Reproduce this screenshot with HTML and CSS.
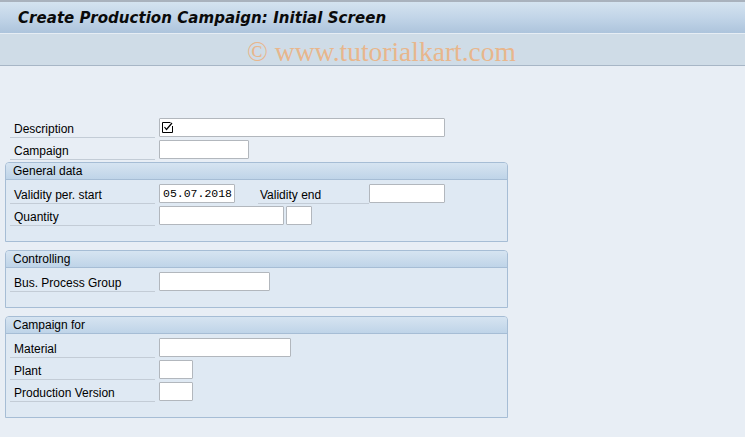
FILE: index.html
```html
<!DOCTYPE html>
<html>
<head>
<meta charset="utf-8">
<link rel="stylesheet" href="styles.css">
</head>
<body>
<div class="titlebar"><span class="title">Create Production Campaign: Initial Screen</span></div>
<div class="toolbar"><span class="watermark">© www.tutorialkart.com</span></div>
<div class="content">
  <div class="row">
    <span class="label">Description</span>
    <span class="field w-desc"><svg class="chk" width="11" height="11" viewBox="0 0 11 11"><path d="M8.5 0.5 H0.5 V10.5 H10.5 V4" fill="none" stroke="#000" stroke-width="1"/><path d="M2.5 5 L4.5 7.5 L10 1" fill="none" stroke="#000" stroke-width="1.2"/></svg></span>
  </div>
  <div class="row">
    <span class="label">Campaign</span>
    <span class="field w-camp"></span>
  </div>

  <div class="group">
    <div class="group-head">General data</div>
    <div class="group-body">
      <div class="row">
        <span class="label">Validity per. start</span>
        <span class="field w-date mono">05.07.2018</span>
        <span class="label label-end">Validity end</span>
        <span class="field w-date2"></span>
      </div>
      <div class="row">
        <span class="label">Quantity</span>
        <span class="field w-qty"></span>
        <span class="field w-unit"></span>
      </div>
    </div>
  </div>

  <div class="group">
    <div class="group-head">Controlling</div>
    <div class="group-body">
      <div class="row">
        <span class="label">Bus. Process Group</span>
        <span class="field w-bpg"></span>
      </div>
    </div>
  </div>

  <div class="group">
    <div class="group-head">Campaign for</div>
    <div class="group-body">
      <div class="row">
        <span class="label">Material</span>
        <span class="field w-mat"></span>
      </div>
      <div class="row">
        <span class="label">Plant</span>
        <span class="field w-plant"></span>
      </div>
      <div class="row">
        <span class="label">Production Version</span>
        <span class="field w-plant"></span>
      </div>
    </div>
  </div>
</div>
</body>
</html>
```

FILE: styles.css
```css
html, body {
  margin: 0;
  padding: 0;
}
body {
  width: 745px;
  height: 437px;
  overflow: hidden;
  background: #e8eef5;
  font-family: "Liberation Sans", Arial, sans-serif;
  font-size: 12px;
  color: #000;
}
.titlebar {
  height: 31px;
  border-top: 2px solid #a9b2bd;
  border-bottom: 1px solid #e6edf4;
  background: linear-gradient(to bottom, #d4e3f0 0%, #c2d5e8 50%, #adc4dc 100%);
  display: flex;
  align-items: center;
  padding-left: 18px;
}
.title {
  font-family: "DejaVu Sans", Verdana, sans-serif;
  font-weight: bold;
  font-style: italic;
  font-size: 15px;
  letter-spacing: 0.05px;
  color: #0a0a0a;
  padding-top: 1px;
}
.toolbar {
  height: 31px;
  background: #cfdce7;
  border-bottom: 1px solid #a7b6c6;
  display: flex;
  align-items: center;
  justify-content: center;
}
.watermark {
  font-family: "Liberation Serif", "Times New Roman", serif;
  font-size: 27.5px;
  color: #e8b68c;
  margin-left: 18px;
  margin-top: 4px;
}
.content {
  padding-top: 52px;
}
.row {
  display: flex;
  align-items: flex-start;
  height: 22px;
}
.label {
  box-sizing: border-box;
  width: 145px;
  height: 20px;
  margin-left: 10px;
  padding-left: 4px;
  padding-top: 2px;
  line-height: 18px;
  border-bottom: 1px solid #c3ccd6;
  white-space: nowrap;
}
.field {
  box-sizing: border-box;
  height: 19px;
  margin-left: 4px;
  background: #fff;
  border: 1px solid #b2b7bd;
  border-radius: 1px;
  display: flex;
  align-items: center;
}
.chk {
  margin-left: 2px;
}
.mono {
  font-family: "Liberation Mono", "Courier New", monospace;
  font-size: 11.5px;
  padding-left: 3px;
}
.w-desc { width: 286px; }
.w-camp { width: 90px; }
.w-date { width: 76px; }
.w-date2 { width: 76px; margin-left: 0; }
.w-qty { width: 125px; }
.w-unit { width: 26px; margin-left: 2px; }
.w-bpg { width: 111px; }
.w-mat { width: 132px; }
.w-plant { width: 34px; }
.group {
  box-sizing: border-box;
  width: 503px;
  margin-left: 5px;
  margin-bottom: 8px;
  border: 1px solid #a6bdd5;
  border-radius: 4px 4px 0 0;
  background: #dfe9f3;
}
.group-head {
  height: 16px;
  line-height: 16px;
  padding-left: 7px;
  background: linear-gradient(to bottom, #d6e4f1 0%, #bfd4e8 100%);
  border-bottom: 1px solid #a6bdd5;
  border-radius: 3px 3px 0 0;
}
.group-body {
  padding-top: 4px;
  padding-bottom: 13px;
}
.group .label {
  margin-left: 4px;
}
.group .label-end {
  width: 111px;
  margin-left: 23px;
  padding-left: 2px;
}
```
